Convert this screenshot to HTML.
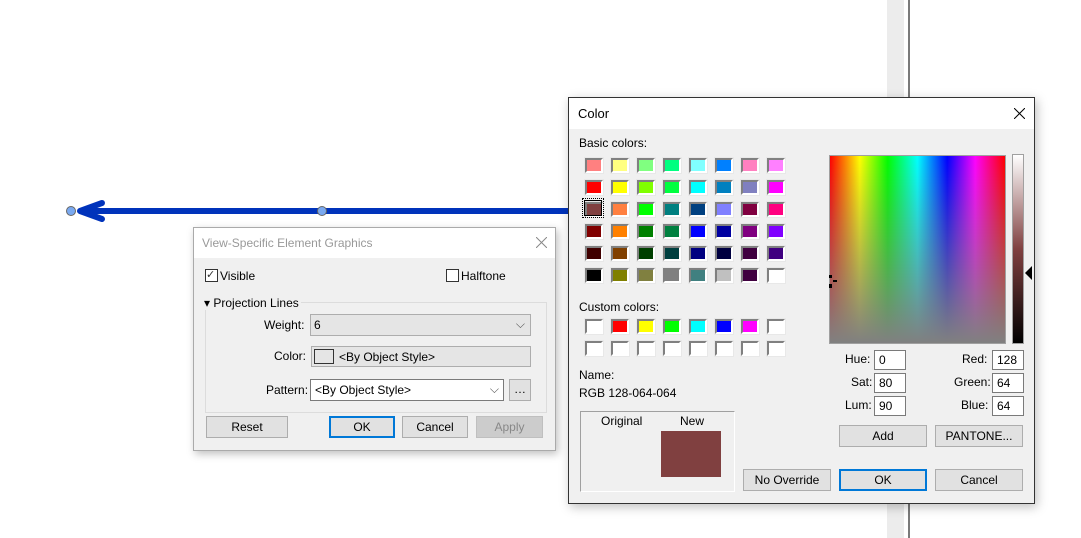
<!DOCTYPE html><html><head><style>
body{margin:0;width:1081px;height:538px;position:relative;background:#fff;font-family:"Liberation Sans",sans-serif;font-size:12px;color:#000;overflow:hidden}
.a{position:absolute}
.btn{position:absolute;background:#e1e1e1;border:1px solid #adadad;box-sizing:border-box;text-align:center;font-size:12px;line-height:20px}
.sw{position:absolute;width:18px;height:15px;box-sizing:border-box;border:2px solid;border-color:#808080 #fff #fff #808080;outline:1px solid #e8e8e8}
.inp{position:absolute;background:#fff;border:1px solid #7a7a7a;box-sizing:border-box;height:20px;line-height:18px;padding-left:4px;font-size:12px}
</style></head><body>
<div class="a" style="left:887px;top:0;width:17px;height:538px;background:#ececec"></div>
<div class="a" style="left:908px;top:0;width:2px;height:538px;background:#7a7a7a"></div>
<svg class="a" style="left:0;top:0" width="600" height="240">
<line x1="80" y1="211" x2="600" y2="211" stroke="#0033bb" stroke-width="6"/>
<path d="M102 203 L80 211 L102 219" fill="none" stroke="#0033bb" stroke-width="6" stroke-linejoin="round" stroke-linecap="round"/>
<circle cx="71" cy="211" r="4.5" fill="#7aa9f0" stroke="#666" stroke-width="1"/>
<circle cx="322" cy="211" r="4.5" fill="#7aa9f0" stroke="#666" stroke-width="1"/>
</svg>

<!-- VSG dialog -->
<div class="a" style="left:193px;top:227px;width:363px;height:224px;background:#f0f0f0;border:1px solid #aaa;box-sizing:border-box;box-shadow:2px 3px 8px rgba(0,0,0,.25)">
<div class="a" style="left:0;top:0;width:361px;height:30px;background:#fff"></div>
<div class="a" style="left:8px;top:8px;color:#999;font-size:12px">View-Specific Element Graphics</div>
<svg class="a" style="left:342px;top:9px" width="11" height="11"><path d="M0 0L11 11M11 0L0 11" stroke="#888" stroke-width="1"/></svg>
<div class="a" style="left:11px;top:41px;width:13px;height:13px;border:1px solid #333;background:#fff;box-sizing:border-box;font-size:11px;line-height:11px;color:#333">✓</div>
<div class="a" style="left:26px;top:41px">Visible</div>
<div class="a" style="left:252px;top:41px;width:13px;height:13px;border:1px solid #333;background:#fff;box-sizing:border-box"></div>
<div class="a" style="left:267px;top:41px">Halftone</div>
<div class="a" style="left:11px;top:74px;width:342px;height:111px;border:1px solid #dcdcdc;box-sizing:border-box"></div>
<div class="a" style="left:8px;top:68px;background:#f0f0f0;padding:0 2px;font-size:12px">▾ Projection Lines</div>
<div class="a" style="left:70px;top:90px">Weight:</div>
<div class="a" style="left:116px;top:86px;width:221px;height:22px;background:#e5e5e5;border:1px solid #adadad;box-sizing:border-box;padding:3px 3px">6<span style="position:absolute;right:5px;top:2px;color:#555">⌵</span></div>
<div class="a" style="left:80px;top:121px">Color:</div>
<div class="a" style="left:117px;top:118px;width:220px;height:21px;background:#e5e5e5;border:1px solid #adadad;box-sizing:border-box"><div class="a" style="left:2px;top:2px;width:20px;height:15px;border:1px solid #333;box-sizing:border-box"></div><div class="a" style="left:27px;top:3px">&lt;By Object Style&gt;</div></div>
<div class="a" style="left:72px;top:155px">Pattern:</div>
<div class="a" style="left:116px;top:151px;width:194px;height:22px;background:#fff;border:1px solid #7a7a7a;box-sizing:border-box;padding:3px 4px">&lt;By Object Style&gt;<span style="position:absolute;right:4px;top:2px;color:#555">⌵</span></div>
<div class="btn" style="left:315px;top:151px;width:22px;height:22px;line-height:18px">…</div>
<div class="btn" style="left:12px;top:188px;width:82px;height:22px">Reset</div>
<div class="btn" style="left:135px;top:188px;width:66px;height:22px;border:2px solid #0078d7;line-height:18px">OK</div>
<div class="btn" style="left:208px;top:188px;width:66px;height:22px">Cancel</div>
<div class="btn" style="left:282px;top:188px;width:67px;height:22px;background:#ccc;border-color:#bfbfbf;color:#888">Apply</div>
</div>

<!-- Color dialog -->
<div class="a" style="left:568px;top:97px;width:467px;height:407px;background:#f0f0f0;border:1px solid #333;box-sizing:border-box;box-shadow:2px 3px 10px rgba(0,0,0,.25)">
<div class="a" style="left:0;top:0;width:465px;height:31px;background:#fff"></div>
<div class="a" style="left:9px;top:8px;font-size:13px">Color</div>
<svg class="a" style="left:445px;top:10px" width="11" height="11"><path d="M0 0L11 11M11 0L0 11" stroke="#000" stroke-width="1"/></svg>
<div class="a" style="left:10px;top:38px">Basic colors:</div>
<div class="a" style="left:10px;top:202px">Custom colors:</div>
<div class="a" style="left:10px;top:270px">Name:</div>
<div class="a" style="left:10px;top:288px">RGB 128-064-064</div>
<div class="a" style="left:11px;top:313px;width:155px;height:81px;border:1px solid #a0a0a0;box-sizing:border-box;border-right-color:#fff;border-bottom-color:#fff"></div>
<div class="a" style="left:32px;top:316px">Original</div>
<div class="a" style="left:111px;top:316px">New</div>
<div class="a" style="left:92px;top:333px;width:60px;height:46px;background:#804040"></div>
<div class="a" style="left:260px;top:57px;width:177px;height:189px;border:1px solid #a0a0a0;box-sizing:border-box;background:linear-gradient(to bottom,rgba(128,128,128,0),#808080),linear-gradient(to right,#f00,#ff0 17%,#0f0 33%,#0ff 50%,#00f 67%,#f0f 83%,#f00)"></div>
<div class="a" style="left:260px;top:177px;width:3px;height:3px;background:#000"></div>
<div class="a" style="left:260px;top:186px;width:3px;height:4px;background:#000"></div>
<div class="a" style="left:264px;top:182px;width:4px;height:2px;background:#000"></div>
<div class="a" style="left:443px;top:56px;width:12px;height:190px;border:1px solid #a0a0a0;box-sizing:border-box;background:linear-gradient(#fff,#804040 50%,#000)"></div>
<div class="a" style="left:456px;top:168px;width:0;height:0;border-top:7px solid transparent;border-bottom:7px solid transparent;border-right:7px solid #000"></div>
<div class="a" style="left:276px;top:254px">Hue:</div><div class="inp" style="left:305px;top:252px;width:32px">0</div>
<div class="a" style="left:282px;top:277px">Sat:</div><div class="inp" style="left:305px;top:275px;width:32px">80</div>
<div class="a" style="left:276px;top:300px">Lum:</div><div class="inp" style="left:305px;top:298px;width:32px">90</div>
<div class="a" style="left:393px;top:254px">Red:</div><div class="inp" style="left:423px;top:252px;width:32px">128</div>
<div class="a" style="left:385px;top:277px">Green:</div><div class="inp" style="left:423px;top:275px;width:32px">64</div>
<div class="a" style="left:392px;top:300px">Blue:</div><div class="inp" style="left:423px;top:298px;width:32px">64</div>
<div class="btn" style="left:270px;top:327px;width:88px;height:22px">Add</div>
<div class="btn" style="left:366px;top:327px;width:88px;height:22px">PANTONE...</div>
<div class="btn" style="left:174px;top:371px;width:88px;height:22px">No Override</div>
<div class="btn" style="left:270px;top:371px;width:88px;height:22px;border:2px solid #0078d7;line-height:18px">OK</div>
<div class="btn" style="left:366px;top:371px;width:88px;height:22px">Cancel</div>
<div id="g"></div>
</div>
<script>
var c=[["#ff8080","#ffff80","#80ff80","#00ff80","#80ffff","#0080ff","#ff80c0","#ff80ff"],
["#ff0000","#ffff00","#80ff00","#00ff40","#00ffff","#0080c0","#8080c0","#ff00ff"],
["#804040","#ff8040","#00ff00","#008080","#004080","#8080ff","#800040","#ff0080"],
["#800000","#ff8000","#008000","#008040","#0000ff","#0000a0","#800080","#8000ff"],
["#400000","#804000","#004000","#004040","#000080","#000040","#400040","#400080"],
["#000000","#808000","#808040","#808080","#408080","#c0c0c0","#400040","#ffffff"]];
var cu=[["#fff","#f00","#ff0","#0f0","#0ff","#00f","#f0f","#fff"],["#fff","#fff","#fff","#fff","#fff","#fff","#fff","#fff"]];
var h="";
for(var r=0;r<6;r++)for(var i=0;i<8;i++)h+='<div class="sw" style="left:'+(16+i*26)+'px;top:'+(60+r*22)+'px;background:'+c[r][i]+'"></div>';
for(var r=0;r<2;r++)for(var i=0;i<8;i++)h+='<div class="sw" style="left:'+(16+i*26)+'px;top:'+(221+r*22)+'px;background:'+cu[r][i]+'"></div>';
h+='<div class="a" style="left:13px;top:100px;width:22px;height:20px;border:1px dotted #000;box-sizing:border-box"></div><div class="a" style="left:15px;top:102px;width:18px;height:16px;border:1px solid #000;box-sizing:border-box"></div>';
document.getElementById("g").innerHTML=h;
</script>
</body></html>
